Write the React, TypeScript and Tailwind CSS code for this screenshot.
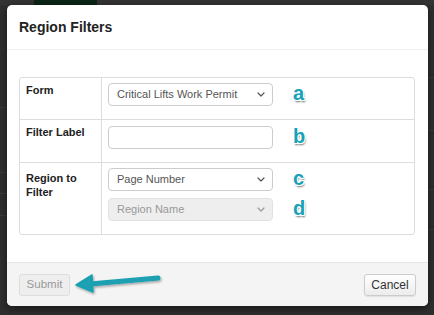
import React from 'react';

const font = { fontFamily: '"Liberation Sans", Arial, sans-serif' };

const Chevron = ({ color = '#555' }: { color?: string }) => (
  <svg width="8" height="5" viewBox="0 0 8 5" className="shrink-0">
    <path d="M1 1 L4 4 L7 1" fill="none" stroke={color} strokeWidth="1.2" strokeLinecap="round" strokeLinejoin="round" />
  </svg>
);

const Letter = ({ ch }: { ch: string }) => (
  <span className="-mt-[3px] w-[26px] pl-[20px] text-[20px] font-bold leading-[26px] text-[#17a2b8] [text-shadow:1px_0_0_#fff,-1px_0_0_#fff,0_1px_0_#fff,0_-1px_0_#fff,1px_1px_0_#fff,-1px_-1px_0_#fff,1px_-1px_0_#fff,-1px_1px_0_#fff,1px_2px_2px_rgba(0,0,0,0.6)]">
    {ch}
  </span>
);

const Select = ({ value, disabled }: { value: string; disabled?: boolean }) => (
  <div
    className={`flex h-[23px] w-[165px] shrink-0 items-center justify-between rounded-[4px] border pl-[8px] pr-[7px] text-[11px] ${
      disabled ? 'border-[#e2e2e2] bg-[#eeeeee] text-[#999]' : 'border-[#cccccc] bg-white text-[#555]'
    }`}
  >
    <span>{value}</span>
    <Chevron color={disabled ? '#999' : '#555'} />
  </div>
);

export default function App() {
  return (
    <div className="relative h-[315px] w-[434px] overflow-hidden bg-[#2f2f2f]" style={font}>
      {/* page behind the overlay */}
      <div className="flex h-[5px] bg-[#333]">
        <div className="ml-[34px] h-full w-[63px] bg-[#0b2416]" />
      </div>
      <div className="absolute left-0 top-[107px] h-px w-[7px] bg-[#3c3c3c]" />
      <div className="absolute left-0 top-[172px] h-px w-[7px] bg-[#3c3c3c]" />
      <div className="absolute left-0 top-[193px] h-px w-[7px] bg-[#3c3c3c]" />
      <div className="absolute left-0 top-[215px] h-px w-[7px] bg-[#3c3c3c]" />
      <div className="absolute right-0 top-[77px] h-px w-[6px] bg-[#3c3c3c]" />
      <div className="absolute right-0 top-[130px] h-px w-[6px] bg-[#3c3c3c]" />
      <div className="absolute right-0 top-[189px] h-px w-[6px] bg-[#3c3c3c]" />
      <div className="absolute right-0 top-[229px] h-px w-[6px] bg-[#3c3c3c]" />

      {/* modal */}
      <div className="absolute left-[7px] top-[5px] flex h-[301px] w-[421px] flex-col overflow-hidden rounded-[5px] bg-white shadow-[0_3px_9px_rgba(0,0,0,0.5)]">
        <div className="flex h-[45px] shrink-0 items-center border-b border-[#eeeeee] px-[12px]">
          <h4 className="text-[14px] font-bold text-[#222]">Region Filters</h4>
        </div>

        <div className="flex-1 px-[12px] pt-[27px]">
          <div className="w-[396px] rounded-[3px] border border-[#dddddd] text-[11px] leading-[13px]">
            <div className="flex h-[42px] border-b border-[#dddddd]">
              <div className="w-[82px] shrink-0 border-r border-[#dddddd] pl-[6px] pt-[6px] font-bold text-[#222]">Form</div>
              <div className="flex items-start pl-[6px] pt-[5px]">
                <Select value="Critical Lifts Work Permit" />
                <Letter ch="a" />
              </div>
            </div>
            <div className="flex h-[43px] border-b border-[#dddddd]">
              <div className="w-[82px] shrink-0 border-r border-[#dddddd] pl-[6px] pt-[6px] font-bold text-[#222]">Filter Label</div>
              <div className="flex items-start pl-[6px] pt-[6px]">
                <div className="h-[23px] w-[165px] shrink-0 rounded-[4px] border border-[#cccccc] bg-white" />
                <Letter ch="b" />
              </div>
            </div>
            <div className="flex h-[71px]">
              <div className="w-[82px] shrink-0 border-r border-[#dddddd] pl-[6px] pt-[8px] font-bold leading-[14px] text-[#222]">
                Region to
                <br />
                Filter
              </div>
              <div className="flex flex-col gap-[7px] pl-[6px] pt-[5px]">
                <div className="flex items-start">
                  <Select value="Page Number" />
                  <Letter ch="c" />
                </div>
                <div className="flex items-start">
                  <Select value="Region Name" disabled />
                  <Letter ch="d" />
                </div>
              </div>
            </div>
          </div>
        </div>

        <div className="relative flex h-[44px] shrink-0 items-center justify-between border-t border-[#e5e5e5] bg-[#f4f4f4] px-[12px]">
          <button className="h-[22px] w-[51px] rounded-[3px] border border-[#dddddd] bg-[#eeeeee] text-[11.5px] text-[#999]">
            Submit
          </button>
          <button className="h-[22px] w-[52px] rounded-[3px] border border-[#cccccc] bg-gradient-to-b from-white to-[#ececec] text-[12px] text-[#333] shadow-[0_1px_1px_rgba(0,0,0,0.08)]">
            Cancel
          </button>
          <svg className="absolute left-[66px] top-[7px]" width="96" height="30" viewBox="0 0 96 30">
            <defs>
              <filter id="sh" x="-20%" y="-40%" width="140%" height="180%">
                <feDropShadow dx="1" dy="1.5" stdDeviation="1.2" floodColor="#000" floodOpacity="0.35" />
              </filter>
            </defs>
            <g filter="url(#sh)">
              <path d="M17 14 L85 8" stroke="#1aa0b2" strokeWidth="5" strokeLinecap="round" fill="none" />
              <path d="M3 15 L19 5 L20 22 Z" fill="#1aa0b2" stroke="#1aa0b2" strokeWidth="1.5" strokeLinejoin="round" />
            </g>
          </svg>
        </div>
      </div>
    </div>
  );
}
